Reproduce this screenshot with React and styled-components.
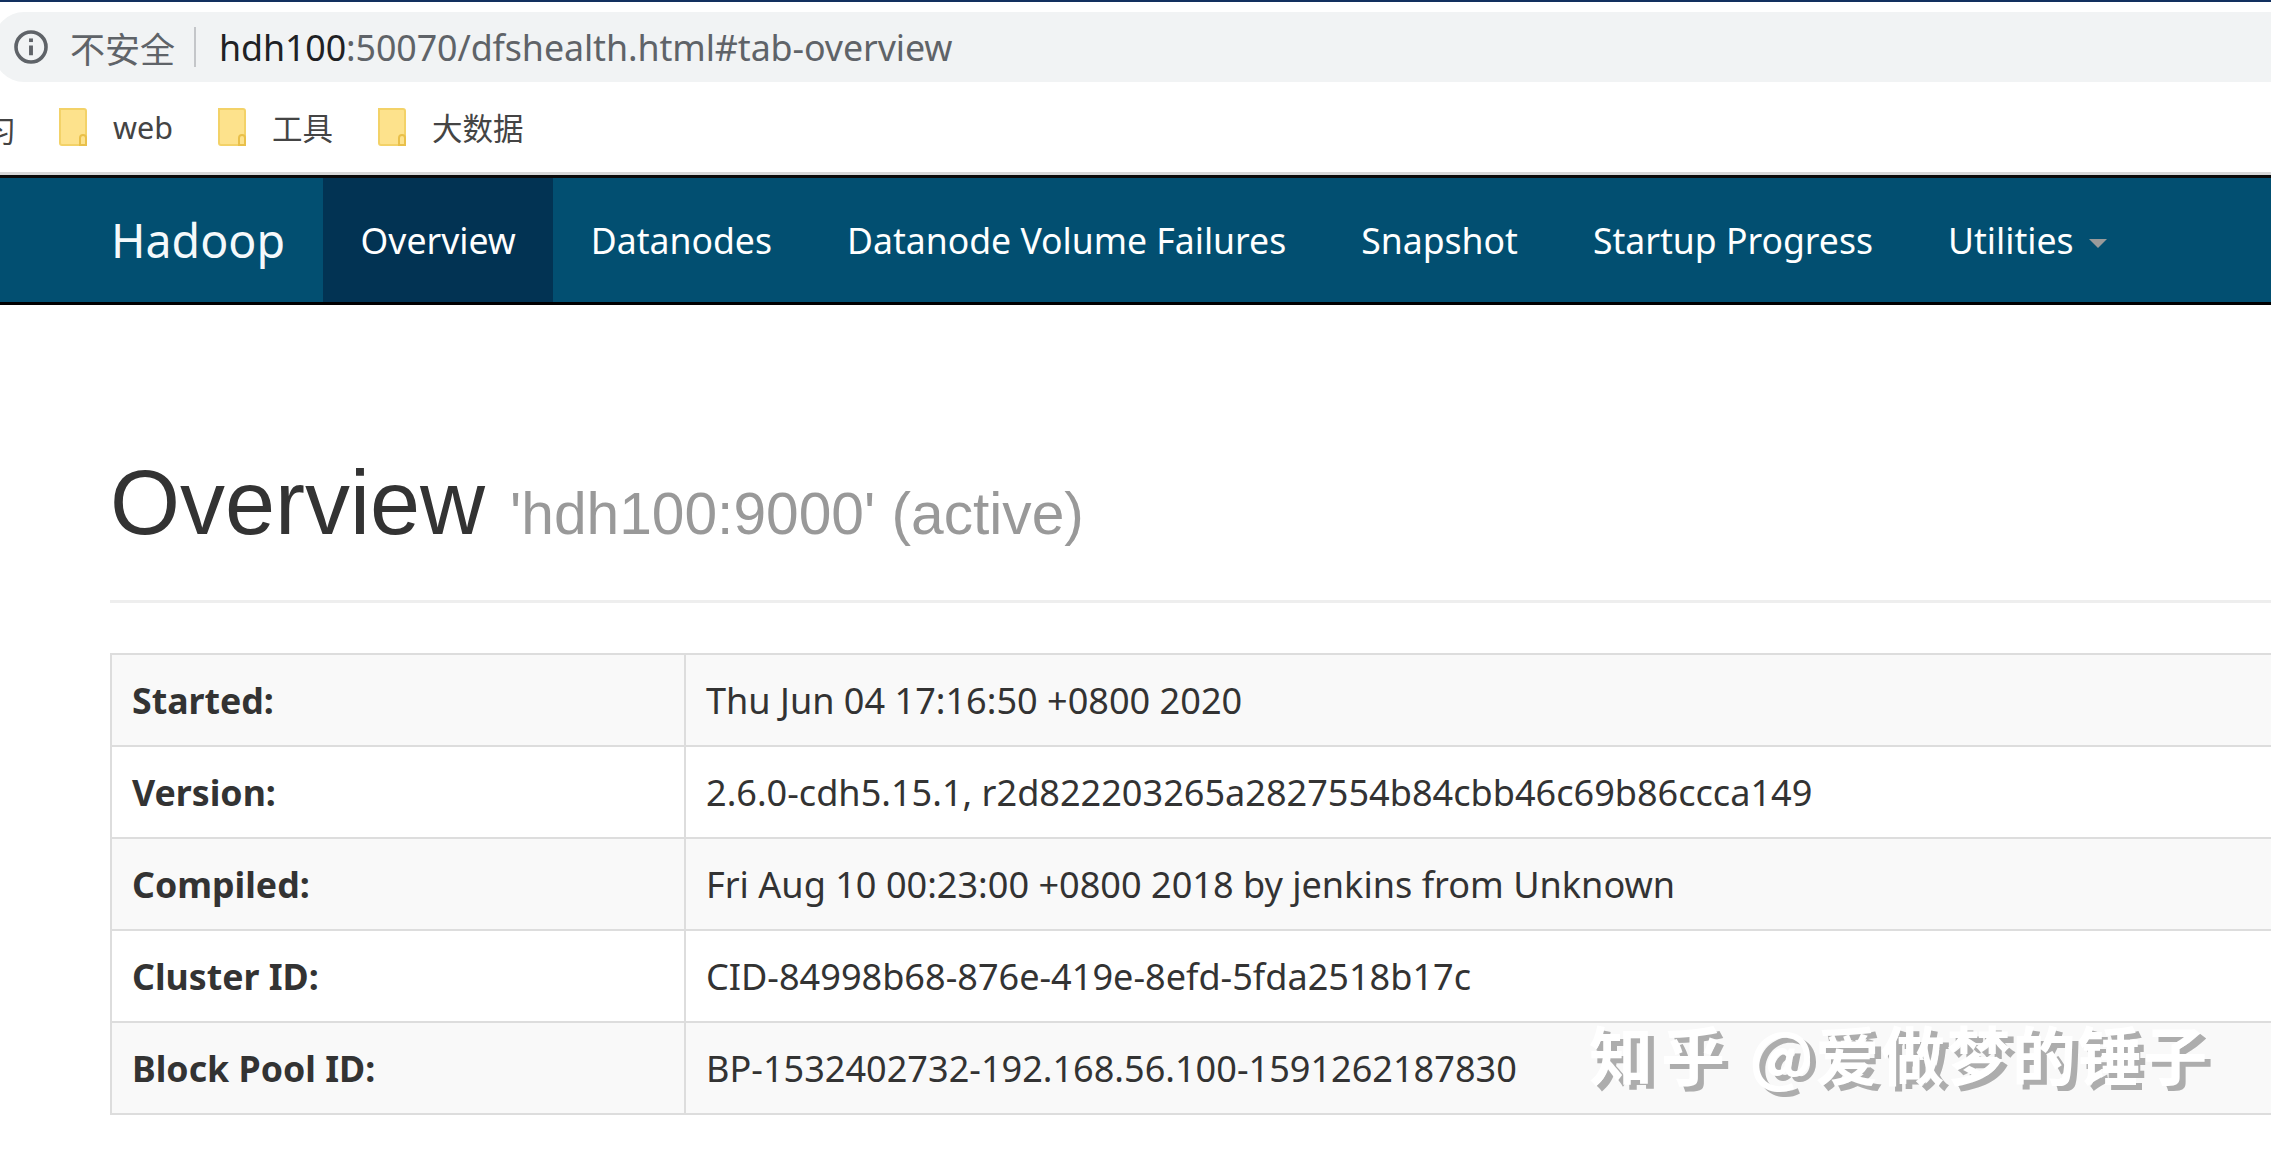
import React from "react";
import styled, { createGlobalStyle } from "styled-components";

const GlobalStyle = createGlobalStyle`
  html, body {
    margin: 0;
    padding: 0;
    background: #fff;
    overflow: hidden;
  }
  body {
    width: 2271px;
    height: 1155px;
    font-family: "Noto Sans", "Noto Sans CJK SC", sans-serif;
  }
`;

const cjk = `"Noto Sans", "Noto Sans CJK SC", sans-serif`;

const Page = styled.div`
  position: relative;
  width: 2271px;
  height: 1155px;
  overflow: hidden;
  border-top: 2px solid #12305f;
  box-sizing: border-box;
`;

const AddressRow = styled.div`
  padding-top: 10px;
  height: 70px;
`;

const AddressBar = styled.div`
  height: 70px;
  margin-left: -6px;
  padding-left: 19px;
  display: flex;
  align-items: center;
  background: #f1f3f4;
  border-radius: 30px 0 0 30px;
`;

const InfoIcon = styled.svg`
  width: 36px;
  height: 36px;
  flex: none;
`;

const Insecure = styled.span`
  margin-left: 21px;
  font-size: 35px;
  color: #5f6368;
  font-family: ${cjk};
`;

const Divider = styled.span`
  width: 2px;
  height: 40px;
  margin: 0 23px 0 19px;
  background: #c4c6c9;
`;

const Url = styled.span`
  font-size: 35.8px;
  color: #5f6368;
  letter-spacing: -0.1px;
  b {
    font-weight: 400;
    color: #202124;
  }
`;

const BookmarkRow = styled.div`
  height: 90px;
  margin-left: -14px;
  display: flex;
  align-items: center;
  background: #fff;
`;

const CutLabel = styled.span`
  font-size: 30px;
  color: #444;
  width: 28px;
  margin-top: 4px;
`;

const Bookmark = styled.div`
  display: flex;
  align-items: center;
  margin-left: 45px;
`;

const FolderIcon = styled.svg`
  width: 30px;
  height: 38px;
  margin-right: 24px;
  flex: none;
`;

const BookmarkLabel = styled.span`
  font-size: 30.5px;
  color: #444;
`;

const TopRule = styled.div`
  height: 3px;
  background: #d8d8d8;
`;

const Navbar = styled.nav`
  height: 124px;
  display: flex;
  background: #024f71;
  border-top: 3px solid #0a0a0a;
  border-bottom: 3px solid #000;
  padding-left: 73px;
`;

const Brand = styled.a`
  padding: 0 38px;
  font-size: 46.5px;
  color: #f5f9fb;
  display: flex;
  align-items: center;
`;

const NavItem = styled.a`
  padding: 0 37.5px;
  font-size: 35.6px;
  color: #fff;
  display: flex;
  align-items: center;
  background: ${(p) => (p.$active ? "#023353" : "transparent")};
`;

const Caret = styled.span`
  margin: 6px 0 0 15px;
  border-top: 9px solid #9a9a9a;
  border-left: 9px solid transparent;
  border-right: 9px solid transparent;
`;

const Content = styled.main`
  padding-left: 110px;
`;

const Header = styled.div`
  height: 298px;
  box-sizing: border-box;
  border-bottom: 3px solid #eeeeee;
  padding-top: 153px;
`;

const Title = styled.h1`
  margin: 0;
  font-family: "Liberation Sans", Arial, sans-serif;
  font-weight: 400;
  font-size: 90px;
  line-height: 1;
  color: #333;
  white-space: nowrap;
`;

const Subtitle = styled.small`
  margin-left: 25px;
  font-size: 58.7px;
  color: #999;
`;

const Table = styled.table`
  margin-top: 50px;
  width: 2300px;
  border-collapse: collapse;
  table-layout: fixed;
  border: 2px solid #ddd;
`;

const Row = styled.tr`
  height: 92px;
  background: ${(p) => (p.$striped ? "#f9f9f9" : "#fff")};
`;

const Head = styled.th`
  width: 532px;
  padding: 0 20px;
  text-align: left;
  font-size: 35.7px;
  font-weight: 700;
  color: #333;
  border: 2px solid #ddd;
`;

const Cell = styled.td`
  padding: 0 20px;
  font-size: 36.1px;
  color: #333;
  border: 2px solid #ddd;
  white-space: nowrap;
`;

const Watermark = styled.div`
  position: absolute;
  left: 1589px;
  top: 1005px;
  font-family: "Noto Sans CJK SC", sans-serif;
  font-size: 64px;
  font-weight: 700;
  letter-spacing: 1.6px;
  line-height: 90px;
  color: #fff;
  text-shadow: 6px 5px 0 #adadad;
  white-space: nowrap;
`;

const WatermarkBrand = styled.span`
  letter-spacing: 8px;
`;

const Folder = () => (
  <FolderIcon viewBox="0 0 30 38">
    <path d="M1 1h24a2 2 0 0 1 2 2v34H3a2 2 0 0 1-2-2z" fill="#fde28c" stroke="#f3d268" strokeWidth="2" />
    <path d="M21 37v-7a3 3 0 0 1 6 0v7z" fill="#fde28c" stroke="#e9c04a" strokeWidth="2" />
  </FolderIcon>
);

const bookmarks = ["web", "工具", "大数据"];

const navItems = ["Overview", "Datanodes", "Datanode Volume Failures", "Snapshot", "Startup Progress"];

const rows = [
  ["Started:", "Thu Jun 04 17:16:50 +0800 2020"],
  ["Version:", "2.6.0-cdh5.15.1, r2d822203265a2827554b84cbb46c69b86ccca149"],
  ["Compiled:", "Fri Aug 10 00:23:00 +0800 2018 by jenkins from Unknown"],
  ["Cluster ID:", "CID-84998b68-876e-419e-8efd-5fda2518b17c"],
  ["Block Pool ID:", "BP-1532402732-192.168.56.100-1591262187830"],
];

export default function App() {
  return (
    <Page>
      <GlobalStyle />
      <AddressRow>
        <AddressBar>
          <InfoIcon viewBox="0 0 24 24" fill="none" stroke="#5f6368">
            <circle cx="12" cy="12" r="10" strokeWidth="2.4" />
            <path d="M12 11v6.5" strokeWidth="2.6" />
            <path d="M12 6.3v2.4" strokeWidth="2.6" />
          </InfoIcon>
          <Insecure>不安全</Insecure>
          <Divider />
          <Url>
            <b>hdh100</b>:50070/dfshealth.html#tab-overview
          </Url>
        </AddressBar>
      </AddressRow>
      <BookmarkRow>
        <CutLabel>习</CutLabel>
        {bookmarks.map((label) => (
          <Bookmark key={label}>
            <Folder />
            <BookmarkLabel>{label}</BookmarkLabel>
          </Bookmark>
        ))}
      </BookmarkRow>
      <TopRule />
      <Navbar>
        <Brand>Hadoop</Brand>
        {navItems.map((item, i) => (
          <NavItem key={item} $active={i === 0}>
            {item}
          </NavItem>
        ))}
        <NavItem>
          Utilities
          <Caret />
        </NavItem>
      </Navbar>
      <Content>
        <Header>
          <Title>
            Overview<Subtitle>'hdh100:9000' (active)</Subtitle>
          </Title>
        </Header>
        <Table>
          <tbody>
            {rows.map(([label, value], i) => (
              <Row key={label} $striped={i % 2 === 0}>
                <Head>{label}</Head>
                <Cell>{value}</Cell>
              </Row>
            ))}
          </tbody>
        </Table>
      </Content>
      <Watermark>
        <WatermarkBrand>知乎</WatermarkBrand> @爱做梦的锤子
      </Watermark>
    </Page>
  );
}
